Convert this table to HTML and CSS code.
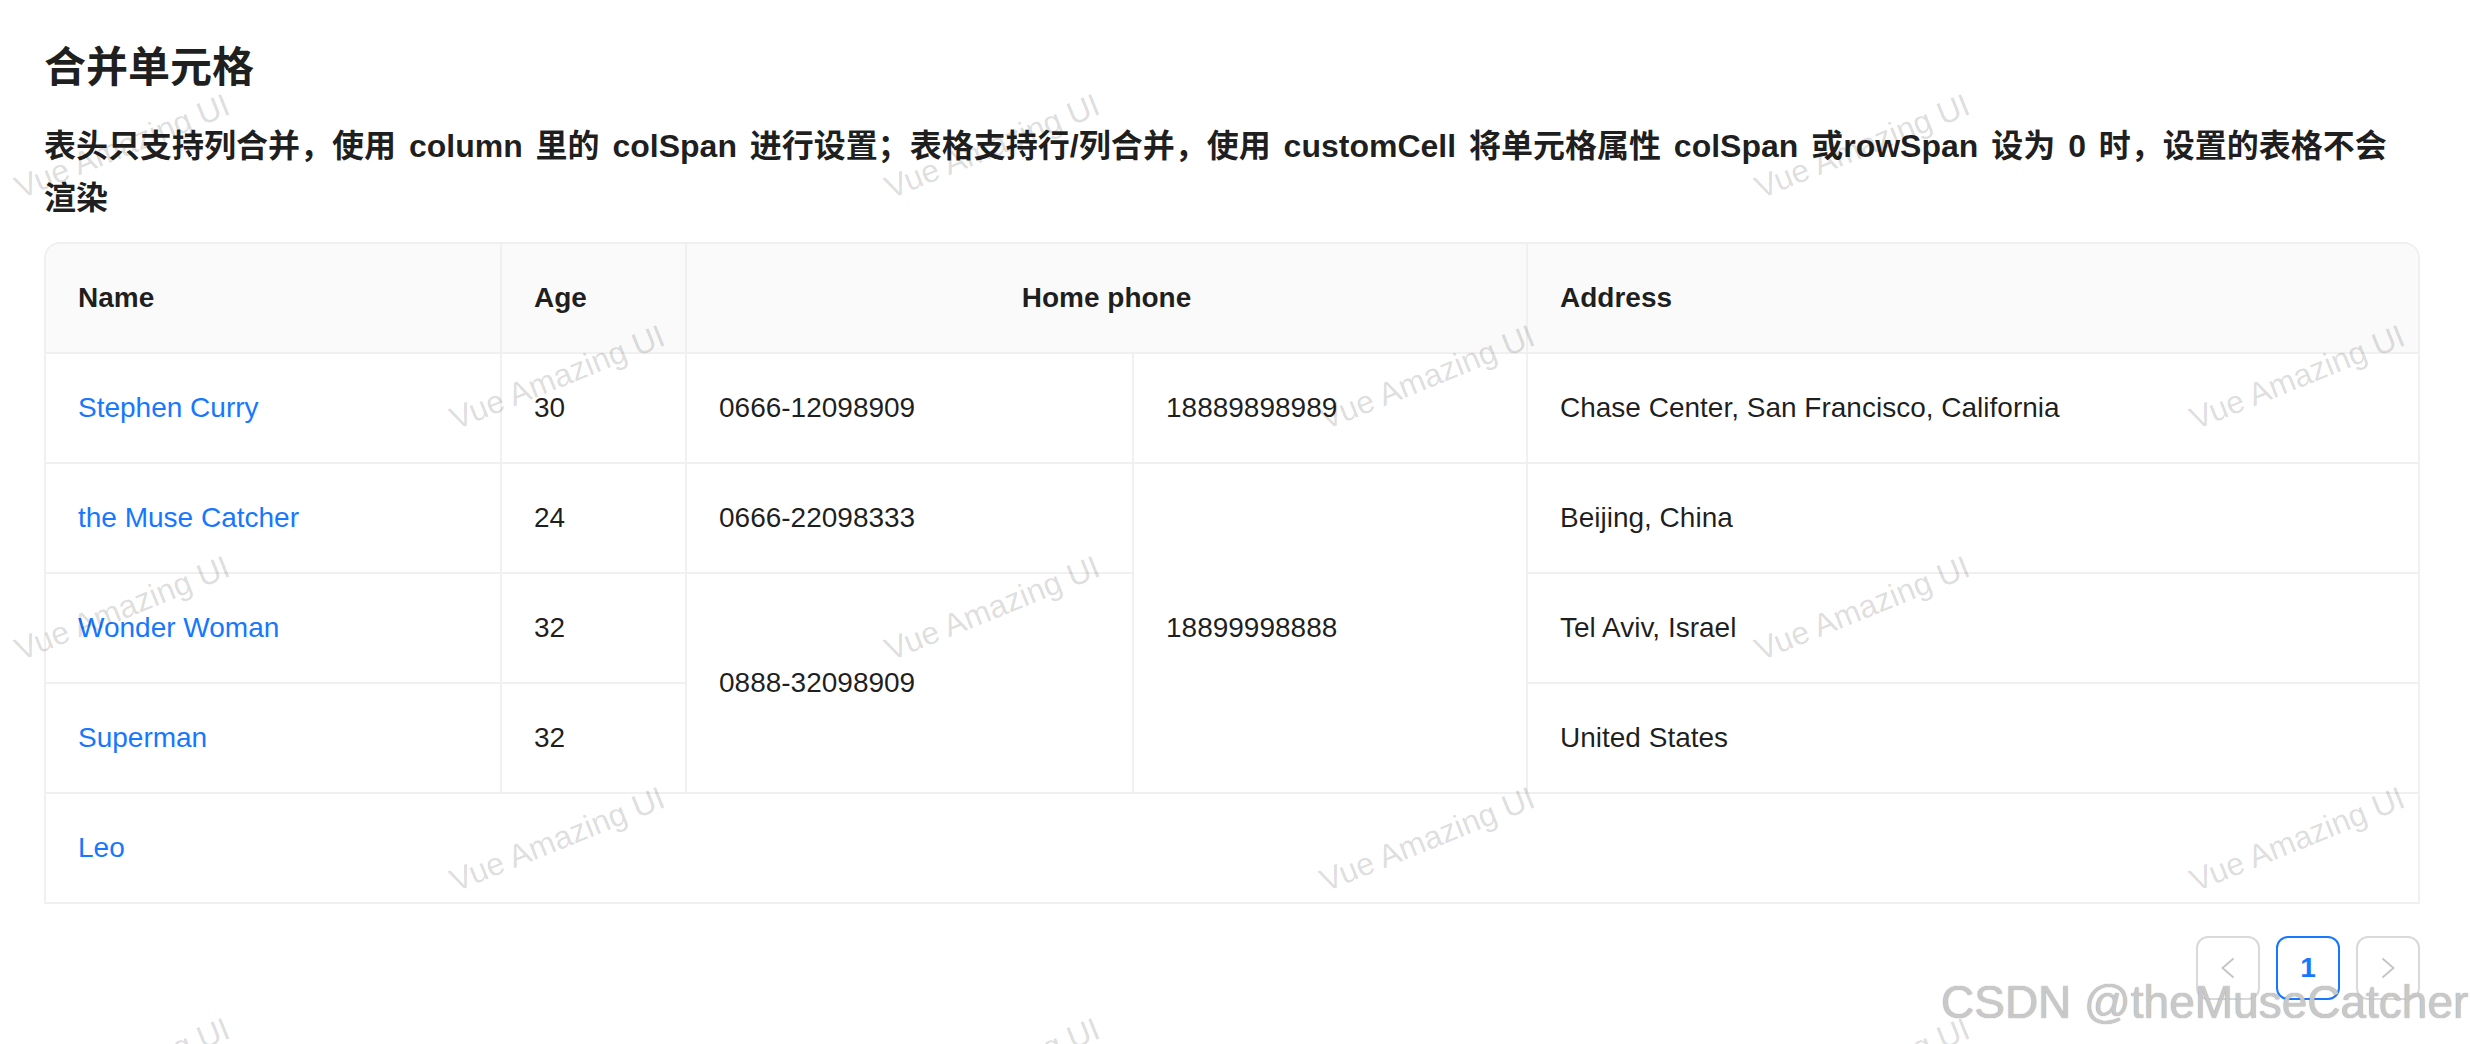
FILE: index.html
```html
<!DOCTYPE html>
<html lang="zh-CN">
<head>
<meta charset="utf-8">
<title>合并单元格</title>
<link rel="stylesheet" href="styles.css">
</head>
<body>
<div class="page">
  <h2 class="title">合并单元格</h2>
  <p class="desc">表头只支持列合并，使用 column 里的 colSpan 进行设置；表格支持行/列合并，使用 customCell 将单元格属性 colSpan 或rowSpan 设为 0 时，设置的表格不会<span class="nobr">渲染</span></p>

  <div class="table-wrap">
    <table class="tbl">
      <colgroup>
        <col class="c-name">
        <col class="c-age">
        <col class="c-p1">
        <col class="c-p2">
        <col class="c-addr">
      </colgroup>
      <thead>
        <tr>
          <th>Name</th>
          <th>Age</th>
          <th colspan="2" class="center">Home phone</th>
          <th class="nr">Address</th>
        </tr>
      </thead>
      <tbody>
        <tr>
          <td><a class="link">Stephen Curry</a></td>
          <td>30</td>
          <td>0666-12098909</td>
          <td>18889898989</td>
          <td class="nr">Chase Center, San Francisco, California</td>
        </tr>
        <tr>
          <td><a class="link">the Muse Catcher</a></td>
          <td>24</td>
          <td>0666-22098333</td>
          <td rowspan="3">18899998888</td>
          <td class="nr">Beijing, China</td>
        </tr>
        <tr>
          <td><a class="link">Wonder Woman</a></td>
          <td>32</td>
          <td rowspan="2">0888-32098909</td>
          <td class="nr">Tel Aviv, Israel</td>
        </tr>
        <tr>
          <td><a class="link">Superman</a></td>
          <td>32</td>
          <td class="nr">United States</td>
        </tr>
        <tr>
          <td colspan="5" class="nr"><a class="link">Leo</a></td>
        </tr>
      </tbody>
    </table>
  </div>

  <div class="pager">
    <span class="pg-btn disabled">
      <svg width="24" height="24" viewBox="0 0 24 24"><path d="M17.5 2.5 L6.5 12 L17.5 21.5" fill="none" stroke="#c4c4c4" stroke-width="1.8" stroke-linejoin="miter"/></svg>
    </span>
    <span class="pg-btn active">1</span>
    <span class="pg-btn disabled">
      <svg width="24" height="24" viewBox="0 0 24 24"><path d="M6.5 2.5 L17.5 12 L6.5 21.5" fill="none" stroke="#c4c4c4" stroke-width="1.8" stroke-linejoin="miter"/></svg>
    </span>
  </div>

  <div class="watermark" aria-hidden="true">
    <div class="wm-row wm-a"><span class="wm-cell"><span class="wm-text">Vue Amazing UI</span></span><span class="wm-cell"><span class="wm-text">Vue Amazing UI</span></span><span class="wm-cell"><span class="wm-text">Vue Amazing UI</span></span></div>
    <div class="wm-row wm-b"><span class="wm-cell"><span class="wm-text">Vue Amazing UI</span></span><span class="wm-cell"><span class="wm-text">Vue Amazing UI</span></span><span class="wm-cell"><span class="wm-text">Vue Amazing UI</span></span></div>
    <div class="wm-row wm-a"><span class="wm-cell"><span class="wm-text">Vue Amazing UI</span></span><span class="wm-cell"><span class="wm-text">Vue Amazing UI</span></span><span class="wm-cell"><span class="wm-text">Vue Amazing UI</span></span></div>
    <div class="wm-row wm-b"><span class="wm-cell"><span class="wm-text">Vue Amazing UI</span></span><span class="wm-cell"><span class="wm-text">Vue Amazing UI</span></span><span class="wm-cell"><span class="wm-text">Vue Amazing UI</span></span></div>
    <div class="wm-row wm-a"><span class="wm-cell"><span class="wm-text">Vue Amazing UI</span></span><span class="wm-cell"><span class="wm-text">Vue Amazing UI</span></span><span class="wm-cell"><span class="wm-text">Vue Amazing UI</span></span></div>
  </div>

  <div class="csdn">CSDN @theMuseCatcher</div>
</div>
</body>
</html>
```

FILE: styles.css
```css
html, body {
  margin: 0;
  padding: 0;
  background: #ffffff;
}

body {
  font-family: "Liberation Sans", "Noto Sans CJK SC", sans-serif;
  color: rgba(0, 0, 0, 0.88);
}

.page {
  position: relative;
  box-sizing: border-box;
  height: 1044px;
  padding: 36px 50px 0 44px;
  overflow: hidden;
}

.title {
  margin: 0;
  font-size: 42px;
  line-height: 63px;
  font-weight: 700;
}

.desc {
  margin: 21px 0 0;
  font-size: 32px;
  line-height: 52px;
  font-weight: 700;
  word-spacing: 4px;
}

.nobr {
  white-space: nowrap;
}

.table-wrap {
  margin-top: 18px;
  border: 2px solid #f0f0f0;
  border-bottom: 0;
  border-radius: 16px 16px 0 0;
  overflow: hidden;
}

.tbl {
  width: 100%;
  table-layout: fixed;
  border-collapse: separate;
  border-spacing: 0;
  font-size: 28px;
  line-height: 44px;
}

.c-name { width: 456px; }
.c-age { width: 185px; }
.c-p1 { width: 447px; }
.c-p2 { width: 394px; }
.c-addr { width: 890px; }

.tbl th,
.tbl td {
  padding: 32px;
  text-align: left;
  vertical-align: middle;
  border-right: 2px solid #f0f0f0;
  border-bottom: 2px solid #f0f0f0;
  white-space: nowrap;
}

.tbl th {
  background: #fafafa;
  font-weight: 700;
  color: rgba(0, 0, 0, 0.88);
}

.tbl th.center {
  text-align: center;
}

.tbl .nr {
  border-right: 0;
}

.link {
  color: #1677ff;
  text-decoration: none;
}

.pager {
  display: flex;
  justify-content: flex-end;
  gap: 16px;
  margin-top: 32px;
}

.pg-btn {
  box-sizing: border-box;
  width: 64px;
  height: 64px;
  border: 2px solid #d9d9d9;
  border-radius: 12px;
  display: flex;
  align-items: center;
  justify-content: center;
  font-size: 28px;
  font-weight: 700;
  color: #1677ff;
}

.pg-btn.active {
  border-color: #1677ff;
}

.watermark {
  position: absolute;
  top: 30px;
  left: 0;
  right: 0;
  bottom: 0;
  pointer-events: none;
  display: flex;
  flex-direction: column;
  overflow: hidden;
}

.wm-row {
  display: flex;
  flex: 0 0 231px;
  height: 231px;
}

.wm-a { margin-left: -313px; }
.wm-b { margin-left: 122px; }

.wm-cell {
  flex: 0 0 870px;
  display: flex;
  align-items: center;
  justify-content: center;
}

.wm-text {
  display: inline-block;
  font-family: "Liberation Sans", sans-serif;
  font-size: 32px;
  line-height: 32px;
  color: rgba(0, 0, 0, 0.15);
  white-space: nowrap;
  transform: rotate(-22deg);
}

.csdn {
  position: absolute;
  left: 1941px;
  top: 979px;
  font-family: "Liberation Sans", sans-serif;
  font-size: 46px;
  line-height: 46px;
  white-space: nowrap;
  color: rgba(215, 215, 215, 0.85);
  text-shadow: 0 0 1px rgba(110, 110, 110, 0.9);
  pointer-events: none;
}
```
